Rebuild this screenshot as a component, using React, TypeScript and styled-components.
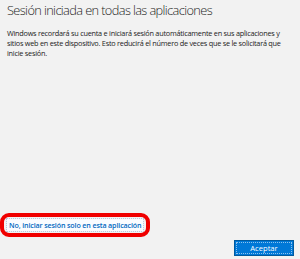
import React from 'react';
import styled, { createGlobalStyle } from 'styled-components';

const GlobalStyle = createGlobalStyle`
  html,
  body {
    margin: 0;
    padding: 0;
    background: #f2f2f2;
  }
`;

const App: React.FC = () => {
  return (
    <>
      <GlobalStyle />
      <Page>
        <Title>Sesión iniciada en todas las aplicaciones</Title>
        <Body>
          Windows recordará su cuenta e iniciará sesión automáticamente en sus aplicaciones y
          <br />
          sitios web en este dispositivo. Esto reducirá el número de veces que se le solicitará que
          <br />
          inicie sesión.
        </Body>
        <Spacer />
        <Highlight>
          <LinkText href="#">No, iniciar sesión solo en esta aplicación</LinkText>
        </Highlight>
        <Footer>
          <PrimaryButton>
            <span>Aceptar</span>
          </PrimaryButton>
        </Footer>
      </Page>
    </>
  );
};

const Page = styled.div`
  width: 300px;
  height: 259px;
  box-sizing: border-box;
  padding: 1px 6px 3px 7px;
  display: flex;
  flex-direction: column;
  background: #f2f2f2;
  font-family: 'Open Sans', 'Noto Sans', sans-serif;
  color: #000;
`;

const Title = styled.h1`
  margin: 0;
  font-size: 12.8px;
  font-weight: 300;
  line-height: 18px;
  color: #1f1f1f;
  letter-spacing: -0.62px;
  white-space: nowrap;
`;

const Body = styled.p`
  margin: 9px 0 0;
  font-size: 7.3px;
  line-height: 10px;
  color: #1a1a1a;
  letter-spacing: -0.24px;
  white-space: nowrap;
`;

const Spacer = styled.div`
  flex: 1;
`;

const Highlight = styled.div`
  align-self: flex-start;
  margin-left: -7px;
  padding: 2px 3px;
  border: 4px solid #f00000;
  border-radius: 9px;
  display: flex;
  align-items: center;
`;

const LinkText = styled.a`
  display: block;
  padding: 1px 2px;
  background: #fafcff;
  outline: 1px dotted #b9c9e0;
  font-size: 7.1px;
  font-weight: 600;
  line-height: 10px;
  color: #0067c0;
  letter-spacing: -0.12px;
  text-decoration: none;
  white-space: nowrap;
`;

const Footer = styled.div`
  display: flex;
  justify-content: flex-end;
  margin-top: 3px;
`;

const PrimaryButton = styled.button`
  width: 60px;
  height: 16px;
  padding: 1px;
  border: 1px solid #005a9e;
  background: #0078d7;
  font-family: inherit;
  display: flex;
  span {
    flex: 1;
    display: flex;
    align-items: center;
    justify-content: center;
    border: 1px dotted rgba(255, 255, 255, 0.55);
    font-size: 7.6px;
    color: #fff;
  }
`;

export default App;
